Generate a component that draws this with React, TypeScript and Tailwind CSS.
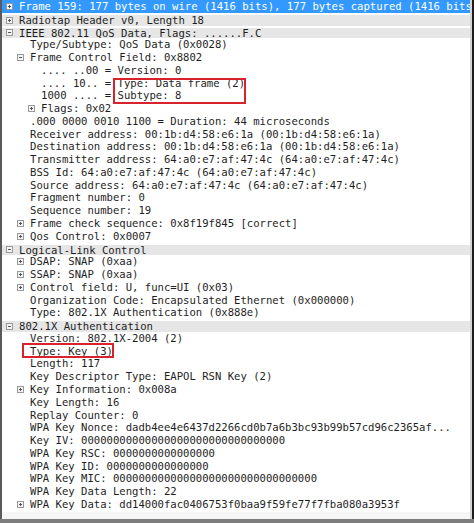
import React from 'react';

type Row = {
  text: string;
  level: number;
  toggle?: 'plus' | 'minus';
  kind?: 'selected' | 'section';
};

const rows: Row[] = [
  { text: 'Frame 159: 177 bytes on wire (1416 bits), 177 bytes captured (1416 bits)', level: 0, toggle: 'plus', kind: 'selected' },
  { text: 'Radiotap Header v0, Length 18', level: 0, toggle: 'plus', kind: 'section' },
  { text: 'IEEE 802.11 QoS Data, Flags: ......F.C', level: 0, toggle: 'minus', kind: 'section' },
  { text: 'Type/Subtype: QoS Data (0x0028)', level: 1 },
  { text: 'Frame Control Field: 0x8802', level: 1, toggle: 'minus' },
  { text: '.... ..00 = Version: 0', level: 2 },
  { text: '.... 10.. = Type: Data frame (2)', level: 2 },
  { text: '1000 .... = Subtype: 8', level: 2 },
  { text: 'Flags: 0x02', level: 2, toggle: 'plus' },
  { text: '.000 0000 0010 1100 = Duration: 44 microseconds', level: 1 },
  { text: 'Receiver address: 00:1b:d4:58:e6:1a (00:1b:d4:58:e6:1a)', level: 1 },
  { text: 'Destination address: 00:1b:d4:58:e6:1a (00:1b:d4:58:e6:1a)', level: 1 },
  { text: 'Transmitter address: 64:a0:e7:af:47:4c (64:a0:e7:af:47:4c)', level: 1 },
  { text: 'BSS Id: 64:a0:e7:af:47:4c (64:a0:e7:af:47:4c)', level: 1 },
  { text: 'Source address: 64:a0:e7:af:47:4c (64:a0:e7:af:47:4c)', level: 1 },
  { text: 'Fragment number: 0', level: 1 },
  { text: 'Sequence number: 19', level: 1 },
  { text: 'Frame check sequence: 0x8f19f845 [correct]', level: 1, toggle: 'plus' },
  { text: 'Qos Control: 0x0007', level: 1, toggle: 'plus' },
  { text: 'Logical-Link Control', level: 0, toggle: 'minus', kind: 'section' },
  { text: 'DSAP: SNAP (0xaa)', level: 1, toggle: 'plus' },
  { text: 'SSAP: SNAP (0xaa)', level: 1, toggle: 'plus' },
  { text: 'Control field: U, func=UI (0x03)', level: 1, toggle: 'plus' },
  { text: 'Organization Code: Encapsulated Ethernet (0x000000)', level: 1 },
  { text: 'Type: 802.1X Authentication (0x888e)', level: 1 },
  { text: '802.1X Authentication', level: 0, toggle: 'minus', kind: 'section' },
  { text: 'Version: 802.1X-2004 (2)', level: 1 },
  { text: 'Type: Key (3)', level: 1 },
  { text: 'Length: 117', level: 1 },
  { text: 'Key Descriptor Type: EAPOL RSN Key (2)', level: 1 },
  { text: 'Key Information: 0x008a', level: 1, toggle: 'plus' },
  { text: 'Key Length: 16', level: 1 },
  { text: 'Replay Counter: 0', level: 1 },
  { text: 'WPA Key Nonce: dadb4ee4e6437d2266cd0b7a6b3bc93b99b57cd96c2365af...', level: 1 },
  { text: 'Key IV: 00000000000000000000000000000000', level: 1 },
  { text: 'WPA Key RSC: 0000000000000000', level: 1 },
  { text: 'WPA Key ID: 0000000000000000', level: 1 },
  { text: 'WPA Key MIC: 00000000000000000000000000000000', level: 1 },
  { text: 'WPA Key Data Length: 22', level: 1 },
  { text: 'WPA Key Data: dd14000fac0406753f0baa9f59fe77f7fba080a3953f', level: 1, toggle: 'plus' },
];

const indent: Record<number, string> = {
  0: 'pl-[4px]',
  1: 'pl-[15px]',
  2: 'pl-[26px]',
};

const Toggle: React.FC<{ type: 'plus' | 'minus' }> = ({ type }) => (
  <svg width="7" height="7" viewBox="0 0 7 7" className="block">
    <rect x="0.5" y="0.5" width="6" height="6" fill="#f4f4f4" stroke="#9a9a9a" />
    <line x1="2" y1="3.5" x2="5" y2="3.5" stroke="#555" />
    {type === 'plus' && <line x1="3.5" y1="2" x2="3.5" y2="5" stroke="#555" />}
  </svg>
);

export default function App() {
  return (
    <div className="w-[474px] h-[523px] bg-[#1c1c1c] flex flex-col overflow-hidden">
      <div className="flex flex-1 min-h-0">
        <div className="w-[2px] bg-[#5a5a5a]" />
        <div
          className="relative flex-1 bg-white overflow-hidden flex flex-col text-[10.6px] text-[#1e1e1e]"
          style={{ fontFamily: '"DejaVu Sans Mono", "Liberation Mono", monospace' }}
        >
          {rows.map((row, i) => {
            const bg =
              row.kind === 'selected'
                ? 'bg-[#3399ff] text-white'
                : row.kind === 'section'
                ? 'bg-[#e6e6e6] border-t-2 border-white'
                : '';
            return (
              <div
                key={i}
                className={`flex items-center shrink-0 h-[12.77px] leading-[12.77px] whitespace-nowrap ${indent[row.level]} ${bg}`}
              >
                <span className="w-[13px] shrink-0 flex items-center">
                  {row.toggle && <Toggle type={row.toggle} />}
                </span>
                <span>{row.text}</span>
              </div>
            );
          })}
          <div className="flex-1" />
          <div className="h-[7px] bg-[#f6f6f6]" />

          {/* highlight boxes */}
          <div className="absolute left-[111px] top-[78px] w-[133px] h-[26px] border-2 border-[#d8232c]" />
          <div className="absolute left-[20px] top-[343px] w-[92px] h-[15px] border-2 border-[#d8232c]" />
        </div>
        <div className="w-[2px] bg-[#d4d4d4]" />
        <div className="w-[2px]" />
      </div>
      <div className="h-[4px] bg-[#7d7d7d]" />
    </div>
  );
}
